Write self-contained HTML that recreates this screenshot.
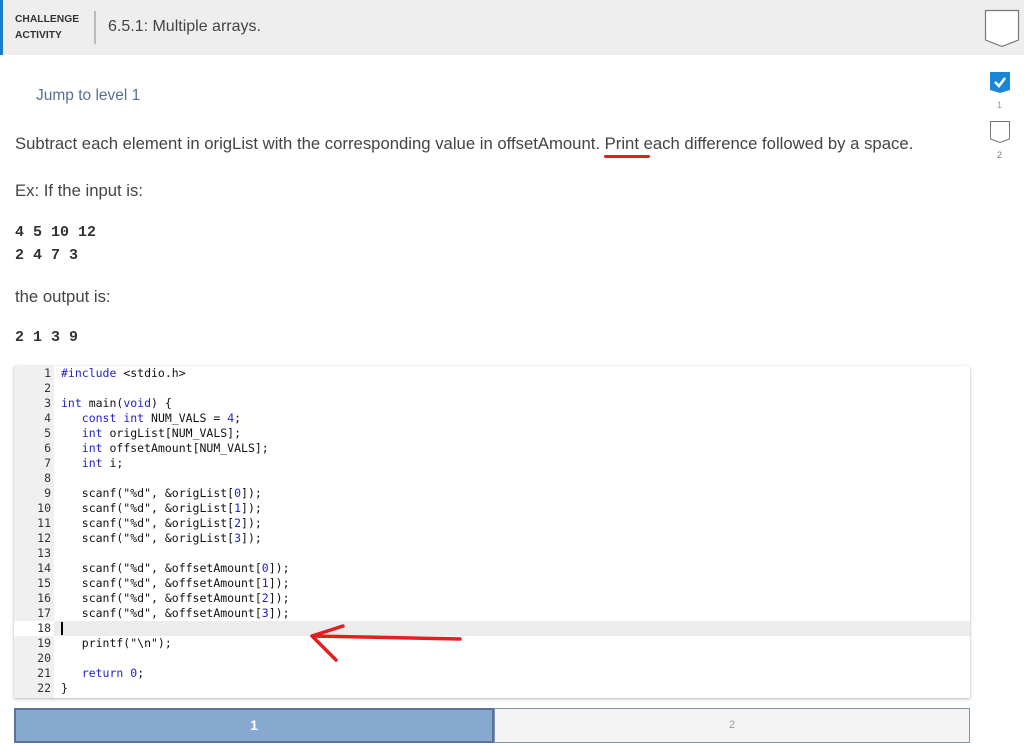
<!DOCTYPE html>
<html><head><style>
body{margin:0;width:1024px;height:745px;background:#fff;font-family:"Liberation Sans",sans-serif;position:relative;overflow:hidden}
.hdr{position:absolute;left:0;top:0;width:1024px;height:55px;background:#eeeeee;border-left:3px solid #1a7bc9;box-sizing:border-box}
.ca{position:absolute;left:12px;top:12px;font-size:10.3px;font-weight:bold;color:#333;line-height:16px}
.sep{position:absolute;left:91px;top:11px;width:2px;height:33px;background:#bbb}
.ttl{position:absolute;left:105px;top:18px;font-size:16px;color:#444}
.t{position:absolute;color:#444;font-size:16.7px}
.mono{font-family:"Liberation Mono",monospace;font-size:15px;font-weight:bold;color:#333;position:absolute;left:15px;line-height:23px}
.code{position:absolute;left:14px;top:366px;width:956px;height:332px;background:#fff;box-shadow:0 1px 3px rgba(0,0,0,.3);font-family:"DejaVu Sans Mono","Liberation Mono",monospace;font-size:11.5px}
.gut{position:absolute;left:0;top:0;width:40px;height:332px;background:#f0f0f0}
.ln{position:absolute;left:0;width:37px;text-align:right;color:#333;height:15px;line-height:15px}
.cl{position:absolute;left:47px;height:15px;line-height:15px;color:#111;white-space:pre}
.k{color:#2222cc}.n{color:#2222cc}
</style></head><body>
<div class="hdr">
<div class="ca">CHALLENGE<br>ACTIVITY</div>
<div class="sep"></div>
<div class="ttl">6.5.1: Multiple arrays.</div>
<svg style="position:absolute;left:981px;top:9px" width="36" height="40"><path d="M1.5 1.5H34.5V31L18 37.5L1.5 31Z" fill="#fff" stroke="#777" stroke-width="1.2"/></svg>
</div>
<svg style="position:absolute;left:990px;top:72px" width="20" height="22"><path d="M0 0H20V18L10 21L0 18Z" fill="#1a86d6"/><path d="M5 10L9 14L15 6" stroke="#fff" stroke-width="2.5" fill="none"/></svg>
<div style="position:absolute;left:997px;top:100px;font-size:9px;color:#999">1</div>
<svg style="position:absolute;left:990px;top:121px" width="20" height="23"><path d="M.5 .5H19.5V18L10 21.5L.5 18Z" fill="#fff" stroke="#777"/></svg>
<div style="position:absolute;left:997px;top:150px;font-size:9px;color:#777">2</div>
<div class="t" style="left:36px;top:87px;font-size:15.5px;color:#5a6f90">Jump to level 1</div>
<div class="t" style="left:15px;top:134px">Subtract each element in origList with the corresponding value in offsetAmount. Print each difference followed by a space.</div>
<div style="position:absolute;left:604px;top:155px;width:46px;height:3px;background:#e02020;border-radius:2px"></div>
<div class="t" style="left:15px;top:181px">Ex: If the input is:</div>
<div class="mono" style="top:221px">4 5 10 12<br>2 4 7 3</div>
<div class="t" style="left:15px;top:287px">the output is:</div>
<div class="mono" style="top:326px">2 1 3 9</div>
<div class="code">
<div class="gut"></div>
<div style="position:absolute;left:0;top:255px;width:40px;height:15px;background:#fff"></div>
<div style="position:absolute;left:40px;top:255px;width:916px;height:15px;background:#ececec"></div>
<div style="position:absolute;left:47px;top:256px;width:2px;height:13px;background:#000"></div>
<div class="ln" style="top:0">1</div><div class="ln" style="top:15px">2</div><div class="ln" style="top:30px">3</div><div class="ln" style="top:45px">4</div><div class="ln" style="top:60px">5</div><div class="ln" style="top:75px">6</div><div class="ln" style="top:90px">7</div><div class="ln" style="top:105px">8</div><div class="ln" style="top:120px">9</div><div class="ln" style="top:135px">10</div><div class="ln" style="top:150px">11</div><div class="ln" style="top:165px">12</div><div class="ln" style="top:180px">13</div><div class="ln" style="top:195px">14</div><div class="ln" style="top:210px">15</div><div class="ln" style="top:225px">16</div><div class="ln" style="top:240px">17</div><div class="ln" style="top:255px">18</div><div class="ln" style="top:270px">19</div><div class="ln" style="top:285px">20</div><div class="ln" style="top:300px">21</div><div class="ln" style="top:315px">22</div>
<div class="cl" style="top:0"><span class="k">#include</span> &lt;stdio.h&gt;</div>
<div class="cl" style="top:30px"><span class="k">int</span> main(<span class="k">void</span>) {</div>
<div class="cl" style="top:45px">   <span class="k">const int</span> NUM_VALS = <span class="n">4</span>;</div>
<div class="cl" style="top:60px">   <span class="k">int</span> origList[NUM_VALS];</div>
<div class="cl" style="top:75px">   <span class="k">int</span> offsetAmount[NUM_VALS];</div>
<div class="cl" style="top:90px">   <span class="k">int</span> i;</div>
<div class="cl" style="top:120px">   scanf("%d", &amp;origList[<span class="n">0</span>]);</div>
<div class="cl" style="top:135px">   scanf("%d", &amp;origList[<span class="n">1</span>]);</div>
<div class="cl" style="top:150px">   scanf("%d", &amp;origList[<span class="n">2</span>]);</div>
<div class="cl" style="top:165px">   scanf("%d", &amp;origList[<span class="n">3</span>]);</div>
<div class="cl" style="top:195px">   scanf("%d", &amp;offsetAmount[<span class="n">0</span>]);</div>
<div class="cl" style="top:210px">   scanf("%d", &amp;offsetAmount[<span class="n">1</span>]);</div>
<div class="cl" style="top:225px">   scanf("%d", &amp;offsetAmount[<span class="n">2</span>]);</div>
<div class="cl" style="top:240px">   scanf("%d", &amp;offsetAmount[<span class="n">3</span>]);</div>
<div class="cl" style="top:270px">   printf("\n");</div>
<div class="cl" style="top:300px">   <span class="k">return</span> <span class="n">0</span>;</div>
<div class="cl" style="top:315px">}</div>
</div>
<svg style="position:absolute;left:300px;top:620px" width="170" height="45"><path d="M160 19L12 16M12 16L43 6M12 16L36 40" stroke="#e02020" stroke-width="3.5" fill="none" stroke-linecap="round"/></svg>
<div style="position:absolute;left:14px;top:708px;width:480px;height:35px;background:#87a9d0;border:2px solid #5a7499;box-sizing:border-box;color:#fff;font-weight:bold;font-size:14px;text-align:center;line-height:31px">1</div>
<div style="position:absolute;left:494px;top:708px;width:476px;height:35px;background:#f4f4f4;border:1px solid #7f92b0;box-sizing:border-box;color:#999;font-size:11px;text-align:center;line-height:33px">2</div>
</body></html>
